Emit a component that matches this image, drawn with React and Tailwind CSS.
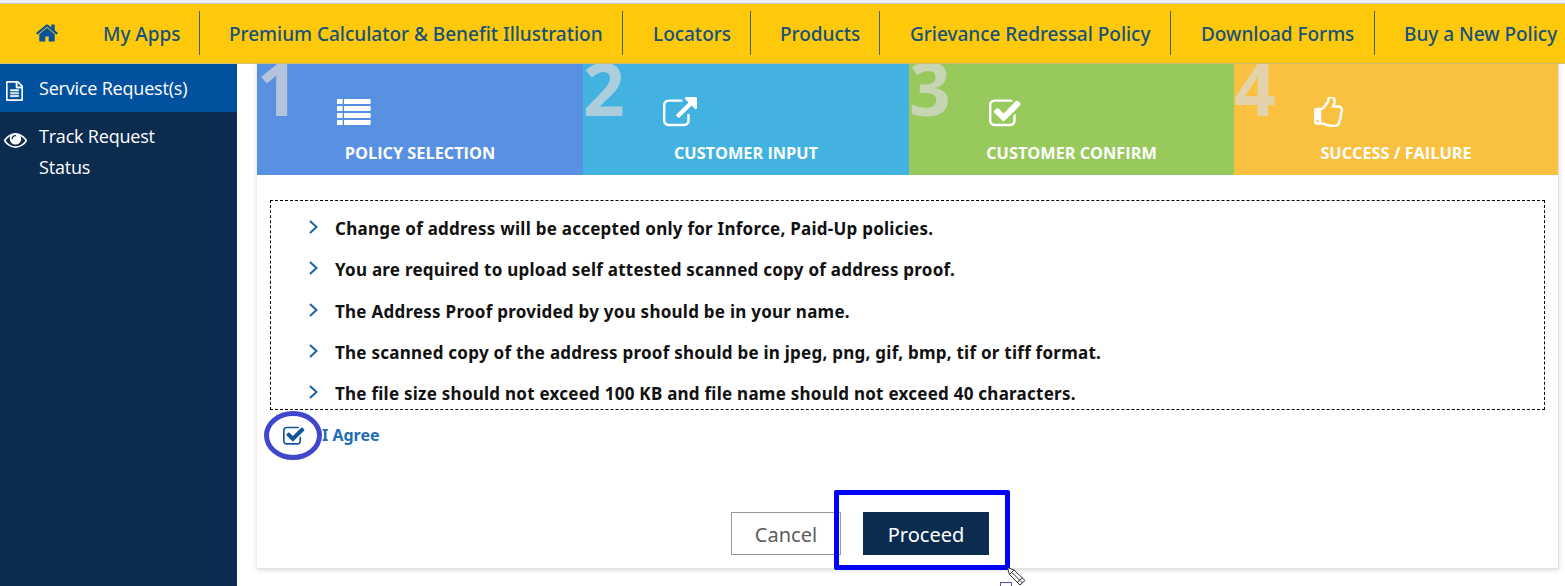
import { clsx } from "clsx";

const navItems = [
  { label: "My Apps", pos: "pl-[17px] w-[114px]" },
  { label: "Premium Calculator & Benefit Illustration", pos: "pl-[29px] w-[423px]" },
  { label: "Locators", pos: "pl-[30px] w-[128px]" },
  { label: "Products", pos: "pl-[29px] w-[129px]" },
  { label: "Grievance Redressal Policy", pos: "pl-[30px] w-[291px]" },
  { label: "Download Forms", pos: "pl-[30px] w-[204px]" },
  { label: "Buy a New Policy", pos: "pl-[29px] border-r-0" },
];

const rules = [
  "Change of address will be accepted only for Inforce, Paid-Up policies.",
  "You are required to upload self attested scanned copy of address proof.",
  "The Address Proof provided by you should be in your name.",
  "The scanned copy of the address proof should be in jpeg, png, gif, bmp, tif or tiff format.",
  "The file size should not exceed 100 KB and file name should not exceed 40 characters.",
];

function HomeIcon({ className }) {
  return (
    <svg viewBox="0 0 1792 1792" fill="currentColor" className={className}>
      <path d="M1472 992v480q0 26-19 45t-45 19h-384v-384h-256v384h-384q-26 0-45-19t-19-45v-480q0-1 .5-3t.5-3l575-474 575 474q1 2 1 6zm223-69l-62 74q-8 9-21 11h-3q-13 0-21-7l-692-577-692 577q-12 8-24 7-13-2-21-11l-62-74q-8-10-7-23.5t11-21.5l719-599q32-26 76-26t76 26l244 204v-195q0-14 9-23t23-9h192q14 0 23 9t9 23v408l219 182q10 8 11 21.5t-7 23.5z" />
    </svg>
  );
}

function FileIcon({ className }) {
  return (
    <svg viewBox="128 0 1536 1792" fill="currentColor" className={className}>
      <path d="M1596 380q28 28 48 76t20 88v1152q0 40-28 68t-68 28h-1344q-40 0-68-28t-28-68v-1600q0-40 28-68t68-28h896q40 0 88 20t76 48zm-444-244v376h376q-10-29-22-41l-313-313q-12-12-41-22zm384 1528v-1024h-416q-40 0-68-28t-28-68v-416h-768v1536h1280zm-1024-864q0-14 9-23t23-9h704q14 0 23 9t9 23v64q0 14-9 23t-23 9h-704q-14 0-23-9t-9-23v-64zm736 224q14 0 23 9t9 23v64q0 14-9 23t-23 9h-704q-14 0-23-9t-9-23v-64q0-14 9-23t23-9h704zm0 256q14 0 23 9t9 23v64q0 14-9 23t-23 9h-704q-14 0-23-9t-9-23v-64q0-14 9-23t23-9h704z" />
    </svg>
  );
}

function EyeIcon({ className }) {
  return (
    <svg viewBox="0 384 1792 1152" fill="currentColor" className={className}>
      <path d="M1664 960q-152-236-381-353 61 104 61 225 0 185-131.5 316.5t-316.5 131.5-316.5-131.5-131.5-316.5q0-121 61-225-229 117-381 353 133 205 333.5 326.5t434.5 121.5 434.5-121.5 333.5-326.5zm-720-384q0-20-14-34t-34-14q-125 0-214.5 89.5t-89.5 214.5q0 20 14 34t34 14 34-14 14-34q0-86 61-147t147-61q20 0 34-14t14-34zm848 384q0 34-20 69-140 230-376.5 368.5t-499.5 138.5-499.5-139-376.5-368q-20-35-20-69t20-69q140-229 376.5-368t499.5-139 499.5 139 376.5 368q20 35 20 69z" />
    </svg>
  );
}

function ListIcon({ className }) {
  return (
    <svg viewBox="0 -2 34 34" fill="currentColor" className={className}>
      {[0, 7, 14, 21].map((y) => (
        <g key={y}>
          <rect x="0" y={y} width="5.6" height="5" rx="0.4" />
          <rect x="7" y={y} width="26.6" height="5" rx="0.4" />
        </g>
      ))}
    </svg>
  );
}

function LinkIcon({ className }) {
  return (
    <svg viewBox="0 0 1792 1792" fill="currentColor" className={className}>
      <path d="M1408 928v320q0 119-84.5 203.5t-203.5 84.5h-832q-119 0-203.5-84.5t-84.5-203.5v-832q0-119 84.5-203.5t203.5-84.5h704q14 0 23 9t9 23v64q0 14-9 23t-23 9h-704q-66 0-113 47t-47 113v832q0 66 47 113t113 47h832q66 0 113-47t47-113v-320q0-14 9-23t23-9h64q14 0 23 9t9 23zm384-864v512q0 26-19 45t-45 19-45-19l-176-176-652 652q-10 10-23 10t-23-10l-114-114q-10-10-10-23t10-23l652-652-176-176q-19-19-19-45t19-45 45-19h512q26 0 45 19t19 45z" />
    </svg>
  );
}

function CheckIcon({ className }) {
  return (
    <svg viewBox="64 0 1792 1792" fill="currentColor" className={className}>
      <path d="M1472 930v318q0 119-84.5 203.5t-203.5 84.5h-832q-119 0-203.5-84.5t-84.5-203.5v-832q0-119 84.5-203.5t203.5-84.5h832q63 0 117 25 15 7 18 23 3 17-9 29l-49 49q-10 10-23 10-3 0-9-2-23-6-45-6h-832q-66 0-113 47t-47 113v832q0 66 47 113t113 47h832q66 0 113-47t47-113v-254q0-13 9-22l64-64q10-10 23-10 6 0 12 3 20 8 20 29zm231-489l-814 814q-24 24-57 24t-57-24l-430-430q-24-24-24-57t24-57l110-110q24-24 57-24t57 24l263 263 647-647q24-24 57-24t57 24l110 110q24 24 24 57t-24 57z" />
    </svg>
  );
}

function ThumbIcon({ className }) {
  return (
    <svg viewBox="128 80 1792 1792" fill="currentColor" className={className}>
      <path d="M384 1344q0-26-19-45t-45-19-45 19-19 45 19 45 45 19 45-19 19-45zm1152-576q0-51-39-89.5t-89-38.5h-352q0-58 48-159.5t48-160.5q0-98-32-145t-128-47q-26 26-38 85t-30.5 125.5-59.5 109.5q-22 23-77 91-4 5-23 30t-31.5 41-34.5 42.5-40 44-38.5 35.5-40 27-35.5 9h-32v640h32q13 0 31.5 3t33 6.5 38 11 35 11.5 35.5 12.5 29 10.5q211 73 342 73h121q192 0 192-167 0-26-5-56 30-16 47.5-52.5t17.5-73.5-18-69q53-50 53-119 0-25-10-55.5t-25-47.5q32-1 53.5-47t21.5-81zm128-1q0 89-49 163 9 33 9 69 0 77-38 144 3 21 3 43 0 101-60 178 1 139-85 219.5t-227 80.5h-129q-96 0-189.5-22.5t-216.5-65.5q-116-40-138-40h-288q-53 0-90.5-37.5t-37.5-90.5v-640q0-53 37.5-90.5t90.5-37.5h274q36-24 137-155 58-75 107-128 24-25 35.5-85.5t30.5-126.5 62-108q39-37 90-37 84 0 151 32.5t102 101.5 35 186q0 93-48 192h176q104 0 180 76t76 179z" />
    </svg>
  );
}

const steps = [
  { num: 1, label: "POLICY SELECTION", Icon: ListIcon, color: "bg-[#5891e2] w-[326px]" },
  { num: 2, label: "CUSTOMER INPUT", Icon: LinkIcon, color: "bg-[#42b3e0] w-[326px]" },
  { num: 3, label: "CUSTOMER CONFIRM", Icon: CheckIcon, color: "bg-[#98c95c] w-[325px]" },
  { num: 4, label: "SUCCESS / FAILURE", Icon: ThumbIcon, color: "bg-[#fac03f] w-[324px]" },
];

export default function App() {
  return (
    <div className="relative flex flex-col w-[1565px] h-[586px] overflow-hidden bg-white font-['Noto_Sans','Open_Sans',sans-serif]">
      {/* Top nav */}
      <div className="h-1 shrink-0 bg-[#ebeef2] border-b border-[#c5c5b8]" />
      <nav className="flex items-start shrink-0 h-[60px] pt-[7px] bg-[#fec90a] border-b border-[#d8c070] text-[#17527a]">
        <HomeIcon className="w-[24px] h-[24px] ml-[35px] mr-[27px] mt-[10px] shrink-0 text-[#07529a]" />
        {navItems.map((item) => (
          <a key={item.label} href="#" className={clsx("h-[44px] shrink-0 border-r border-[#3d6650] text-[19px] leading-[46px] font-medium tracking-[-0.02px] whitespace-nowrap", item.pos)}>
            {item.label}
          </a>
        ))}
      </nav>

      <div className="flex grow">
        {/* Sidebar */}
        <aside className="w-[237px] shrink-0 bg-[#0c2c4f] text-white text-[18px] font-['Open_Sans',sans-serif] font-medium tracking-[-0.2px]">
          <a href="#" className="flex h-[48px] bg-[#02519e] leading-[49px]">
            <FileIcon className="w-[17px] h-[20px] ml-[6px] mr-[16px] mt-[17px] stroke-white stroke-[40]" />
            Service Request(s)
          </a>
          <a href="#" className="flex pt-[9px] leading-[31px]">
            <EyeIcon className="w-[23px] h-[15px] ml-[4px] mr-[12px] mt-[12px]" />
            <span className="w-[140px]">Track Request Status</span>
          </a>
        </aside>

        {/* Main card */}
        <main className="ml-[20px] w-[1302px] h-[505px] shrink-0 border-r border-b border-[#e2e2e2] bg-white shadow-[0_1px_5px_rgba(0,0,0,0.16)]">
          <div className="flex">
            {steps.map(({ num, label, Icon, color }) => (
              <div key={num} className={clsx("relative h-[111px] overflow-hidden text-white", color)}>
                <span className="absolute left-0 top-[-26px] text-[73px] leading-[100px] font-bold font-['Open_Sans',sans-serif] text-[#dadada]/70">
                  {num}
                </span>
                <Icon className="w-[34px] h-[34px] ml-[80px] mt-[33px]" />
                <p className="mt-[10px] text-center text-[16.300px] leading-6 font-bold font-['Open_Sans',sans-serif]">{label}</p>
              </div>
            ))}
          </div>

          <ul className="mt-[25px] ml-[13px] w-[1275px] h-[210px] pt-[7px] border border-dashed border-black text-[17px] font-bold tracking-[0.25px] text-[#111]">
            {rules.map((rule) => (
              <li key={rule} className="flex h-[41.3px] pl-[38px] leading-[41px] whitespace-nowrap">
                <svg viewBox="0 0 9 14" className="w-[9px] h-[14px] mt-[12px] mr-[17px] fill-none stroke-[#1c62a8] stroke-2">
                  <path d="M1 1l6.500 6L1 13" />
                </svg>
                <span>{rule}</span>
              </li>
            ))}
          </ul>

          <label className="relative flex h-[52px] pl-[26px] text-[16px] leading-[50px] font-bold text-[#226db5]">
            <CheckIcon className="w-[23px] h-[23px] mt-[15px] mr-[16px] text-[#14549a]" />
            I Agree
            {/* Pen circle around the checkbox */}
            <span className="absolute left-[7px] top-[1px] w-[58px] h-[49px] rounded-[50%] border-[5px] border-[#3f48cc]" />
          </label>

          <div className="flex mt-[50px] ml-[474px] text-xl">
            <button className="w-[110px] h-[43px] pt-[2px] border border-[#999] text-[#5c5c5c]">Cancel</button>
            <div className="relative ml-[22px]">
              <button className="w-[126px] h-[43px] pt-[2px] bg-[#0c2c4f] text-white">Proceed</button>
              <span className="absolute left-[-29px] top-[-22px] w-[176px] h-[80px] rounded-[2px] border-[5px] border-[#0000ff]" />
            </div>
          </div>
        </main>
      </div>

      {/* Pencil pointer */}
      <span className="absolute left-[1000px] top-[582px] w-[12px] h-[8px] border border-[#5a50c8]" />
      <svg viewBox="0 0 20 20" className="absolute left-[1006px] top-[566px] w-[20px] h-[20px] fill-white stroke-[#333] stroke-1">
        <path d="M1.500 1.500L3.500 8.500L14 19L19 14.500L8 4z" />
        <path d="M3.500 8.500L8 4M11 16.500l5.500-5M6 6.500l10.500 10.500" />
      </svg>
    </div>
  );
}
